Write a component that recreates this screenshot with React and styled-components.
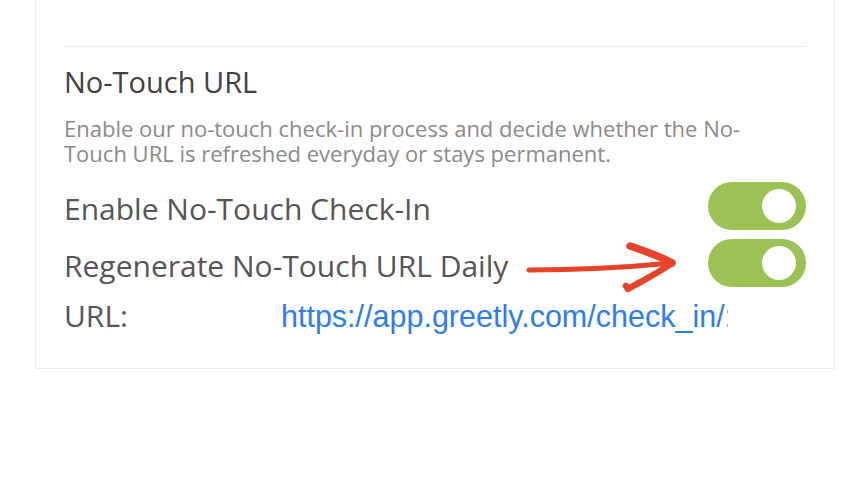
import React from "react";
import styled, { createGlobalStyle } from "styled-components";

const GlobalStyle = createGlobalStyle`
	html, body {
		margin: 0;
		padding: 0;
		background: #fff;
	}
	body {
		font-family: "Open Sans", "Liberation Sans", sans-serif;
	}
`;

const Page = styled.div`
	width: 860px;
	height: 480px;
	padding-left: 35px;
	box-sizing: border-box;
	overflow: hidden;
`;

const Card = styled.div`
	width: 800px;
	box-sizing: border-box;
	border: 1px solid #ececec;
	border-top: none;
	padding: 46px 28px 32px;
	background: #fff;
`;

const Section = styled.div`
	border-top: 1px solid #ebebeb;
	padding-top: 17px;
`;

const Title = styled.h3`
	margin: 0;
	font-size: 29px;
	font-weight: 400;
	line-height: 36px;
	color: #414141;
`;

const Description = styled.p`
	margin: 16px 0 0;
	font-size: 22px;
	line-height: 25px;
	color: #8a8a8a;
	width: 690px;
`;

const Rows = styled.div`
	margin-top: 16px;
	display: flex;
	flex-direction: column;
	gap: 9px;
`;

const Row = styled.div`
	position: relative;
	display: flex;
	align-items: center;
	justify-content: space-between;
	height: 48px;
`;

const Label = styled.span`
	font-size: 30px;
	color: #555;
	line-height: 1;
	padding-top: 6px;
`;

const UrlLabel = styled(Label)`
	width: 217px;
	flex-shrink: 0;
	padding-top: 0;
`;

const UrlRow = styled.div`
	display: flex;
	align-items: center;
	height: 40px;
`;

const UrlBox = styled.div`
	width: 447px;
	height: 40px;
	line-height: 40px;
	overflow: hidden;
	white-space: nowrap;
`;

const Link = styled.a`
	font-family: "Liberation Sans", Arial, sans-serif;
	font-size: 30.5px;
	color: #2f7de6;
	text-decoration: none;
`;

const Toggle = styled.div`
	position: relative;
	width: 98px;
	height: 48px;
	border-radius: 24px;
	background: ${(p) => (p.$on ? "#9bc255" : "#d6d6d6")};
	flex-shrink: 0;

	&::after {
		content: "";
		position: absolute;
		top: 7px;
		right: ${(p) => (p.$on ? "10px" : "54px")};
		width: 34px;
		height: 34px;
		border-radius: 50%;
		background: #fff;
	}
`;

const Arrow = styled.svg`
	position: absolute;
	left: 456px;
	top: 1px;
	width: 160px;
	height: 60px;
	overflow: visible;
`;

const ArrowMark = () => (
	<Arrow viewBox="0 0 160 60">
		<g fill="none" stroke="#e5432a" strokeLinecap="round" strokeLinejoin="round">
			<path d="M 9 30 C 50 30, 100 28, 152 23" strokeWidth="5" />
			<path d="M 110 6 C 124 11, 140 16, 152 23" strokeWidth="7.5" />
			<path d="M 152 23 C 140 32, 122 41, 108 49 L 106 46" strokeWidth="6.5" />
		</g>
	</Arrow>
);

const App = () => {
	return (
		<Page>
			<GlobalStyle />
			<Card>
				<Section>
					<Title>No-Touch URL</Title>
					<Description>
						Enable our no-touch check-in process and decide whether the No-Touch URL is
						refreshed everyday or stays permanent.
					</Description>
					<Rows>
						<Row>
							<Label>Enable No-Touch Check-In</Label>
							<Toggle $on />
						</Row>
						<Row>
							<Label>Regenerate No-Touch URL Daily</Label>
							<ArrowMark />
							<Toggle $on />
						</Row>
						<UrlRow>
							<UrlLabel>URL:</UrlLabel>
							<UrlBox>
								<Link href="#">https://app.greetly.com/check_in/:location</Link>
							</UrlBox>
						</UrlRow>
					</Rows>
				</Section>
			</Card>
		</Page>
	);
};

export default App;
